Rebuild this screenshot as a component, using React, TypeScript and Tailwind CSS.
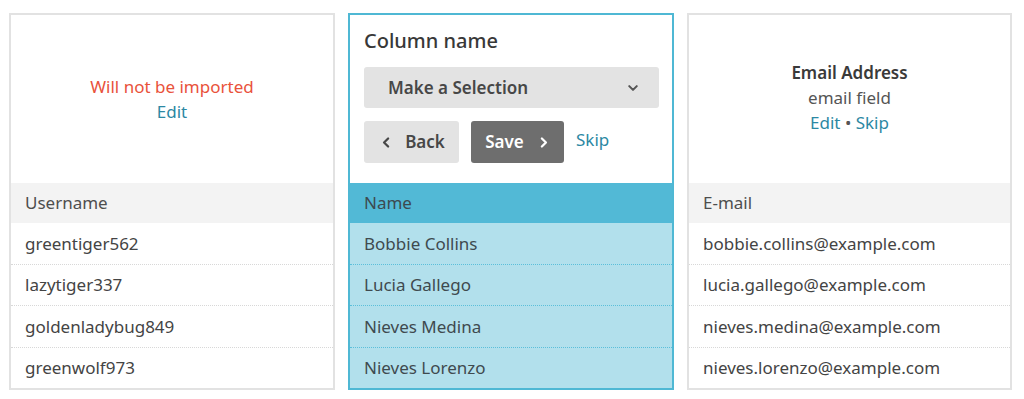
import React from 'react'

const font = { fontFamily: '"Noto Sans", "Open Sans", sans-serif' }

type Column = {
  header: string
  rows: string[]
  active?: boolean
}

const Chevron = ({ dir, className }: { dir: 'left' | 'right' | 'down'; className?: string }) => {
  const d =
    dir === 'left' ? 'M10 3 L5 8 L10 13' : dir === 'right' ? 'M6 3 L11 8 L6 13' : 'M3 5.5 L8 10.5 L13 5.5'
  return (
    <svg viewBox="0 0 16 16" className={className} fill="none" stroke="currentColor" strokeWidth={2.8} strokeLinecap="round" strokeLinejoin="round">
      <path d={d} />
    </svg>
  )
}

function Rows({ column }: { column: Column }) {
  const active = column.active
  return (
    <>
      <div
        className={`h-[40px] flex items-center px-[14px] text-[17px] ${
          active ? 'bg-[#52b9d6] text-[#3d4a50]' : 'bg-[#f3f3f3] text-[#4e4e4e]'
        }`}
      >
        {column.header}
      </div>
      <div className={`flex-1 flex flex-col ${active ? 'bg-[#b2e0ec]' : 'bg-white'}`}>
        {column.rows.map((r, i) => (
          <div
            key={r}
            className={`flex-1 flex items-center px-[14px] text-[17px] ${
              active ? 'text-[#3f4a4f]' : 'text-[#444]'
            } ${i > 0 ? (active ? 'border-t border-dotted border-[#5bbfda]' : 'border-t border-dotted border-[#d8d8d8]') : ''}`}
          >
            {r}
          </div>
        ))}
      </div>
    </>
  )
}

export default function App() {
  const usernames: Column = {
    header: 'Username',
    rows: ['greentiger562', 'lazytiger337', 'goldenladybug849', 'greenwolf973'],
  }
  const names: Column = {
    header: 'Name',
    rows: ['Bobbie Collins', 'Lucia Gallego', 'Nieves Medina', 'Nieves Lorenzo'],
    active: true,
  }
  const emails: Column = {
    header: 'E-mail',
    rows: [
      'bobbie.collins@example.com',
      'lucia.gallego@example.com',
      'nieves.medina@example.com',
      'nieves.lorenzo@example.com',
    ],
  }

  return (
    <div className="w-[1024px] h-[399px] bg-white pl-[9px] pt-[13px]" style={font}>
      <div className="grid grid-cols-[326px_326px_325px] gap-x-[13px] h-[377px]">
        {/* Skipped column */}
        <div className="border-2 border-[#e2e2e2] flex flex-col bg-white">
          <div className="h-[168px] flex flex-col items-center justify-center text-[17px] leading-[25px] pb-[1px]">
            <span className="text-[#e9523b]">Will not be imported</span>
            <a className="text-[#2c88a3] cursor-pointer">Edit</a>
          </div>
          <Rows column={usernames} />
        </div>

        {/* Column being edited */}
        <div className="border-2 border-[#4fb8d4] flex flex-col bg-white">
          <div className="h-[168px] pt-[12px] pl-[14px] pr-[13px]">
            <div className="text-[20px] leading-[27px] font-medium text-[#383838]">Column name</div>
            <button className="mt-[13px] w-full h-[41px] rounded-[3px] bg-[#e3e3e3] flex items-center justify-between pl-[24px] pr-[20px] text-[17px] font-semibold text-[#474747]">
              Make a Selection
              <Chevron dir="down" className="w-[12px] h-[12px] text-[#555]" />
            </button>
            <div className="mt-[13px] flex items-center gap-x-[12px]">
              <button className="h-[42px] w-[95px] rounded-[3px] bg-[#e3e3e3] flex items-center justify-center gap-x-[12px] pl-[2px] text-[17px] font-semibold text-[#474747]">
                <Chevron dir="left" className="w-[13px] h-[13px]" />
                Back
              </button>
              <button className="h-[42px] w-[93px] rounded-[3px] bg-[#6e6e6e] flex items-center justify-center gap-x-[13px] text-[17px] font-semibold text-white">
                Save
                <Chevron dir="right" className="w-[13px] h-[13px]" />
              </button>
              <a className="text-[17px] text-[#2c88a3] cursor-pointer -mt-[4px]">Skip</a>
            </div>
          </div>
          <Rows column={names} />
        </div>

        {/* Mapped column */}
        <div className="border-2 border-[#e2e2e2] flex flex-col bg-white">
          <div className="h-[168px] flex flex-col items-center justify-center text-[17px] leading-[25px] pb-[3px]">
            <span className="font-semibold text-[#3a3a3a]">Email Address</span>
            <span className="text-[#555]">email field</span>
            <span>
              <a className="text-[#2c88a3] cursor-pointer">Edit</a>
              <span className="text-[#555]"> • </span>
              <a className="text-[#2c88a3] cursor-pointer">Skip</a>
            </span>
          </div>
          <Rows column={emails} />
        </div>
      </div>
    </div>
  )
}
